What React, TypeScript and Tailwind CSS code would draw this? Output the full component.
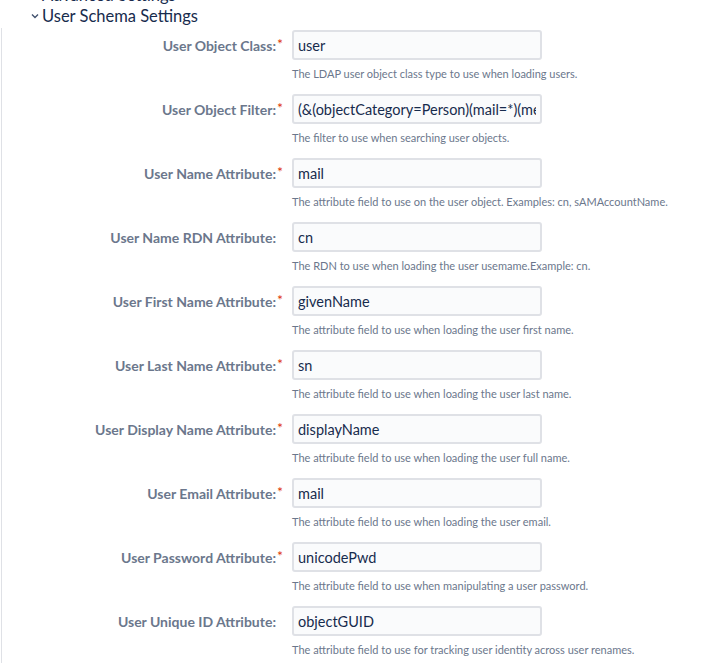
import React from "react";

type Field = {
  label: string;
  value: string;
  help: string;
  required?: boolean;
};

const fields: Field[] = [
  { label: "User Object Class:", value: "user", help: "The LDAP user object class type to use when loading users.", required: true },
  { label: "User Object Filter:", value: "(&(objectCategory=Person)(mail=*)(memberOf=*))", help: "The filter to use when searching user objects.", required: true },
  { label: "User Name Attribute:", value: "mail", help: "The attribute field to use on the user object. Examples: cn, sAMAccountName.", required: true },
  { label: "User Name RDN Attribute:", value: "cn", help: "The RDN to use when loading the user usemame.Example: cn." },
  { label: "User First Name Attribute:", value: "givenName", help: "The attribute field to use when loading the user first name.", required: true },
  { label: "User Last Name Attribute:", value: "sn", help: "The attribute field to use when loading the user last name.", required: true },
  { label: "User Display Name Attribute:", value: "displayName", help: "The attribute field to use when loading the user full name.", required: true },
  { label: "User Email Attribute:", value: "mail", help: "The attribute field to use when loading the user email.", required: true },
  { label: "User Password Attribute:", value: "unicodePwd", help: "The attribute field to use when manipulating a user password.", required: true },
  { label: "User Unique ID Attribute:", value: "objectGUID", help: "The attribute field to use for tracking user identity across user renames." },
];

function Chevron({ down }: { down?: boolean }) {
  return (
    <svg width="10" height="10" viewBox="0 0 10 10" className="shrink-0">
      {down ? (
        <path d="M2 3.5 L5 6.5 L8 3.5" fill="none" stroke="#42526e" strokeWidth="1.4" />
      ) : (
        <path d="M3.5 2 L6.5 5 L3.5 8" fill="none" stroke="#42526e" strokeWidth="1.4" />
      )}
    </svg>
  );
}

function Row({ field }: { field: Field }) {
  return (
    <div className="flex items-start h-16">
      <div className="w-[274px] shrink-0 flex justify-end h-[30px] items-center">
        <label className="relative text-[14px] font-bold text-[#6b778c]">
          {field.label}
          {field.required ? <span className="absolute -right-[7px] -top-[2px] text-[#de350b] font-normal">*</span> : null}
        </label>
      </div>
      <div className="ml-[16px] flex flex-col">
        <input
          readOnly
          defaultValue={field.value}
          className="w-[250px] h-[30px] rounded-[3px] border-2 border-[#dfe1e6] bg-[#fafbfc] px-[4px] text-[14.5px] text-[#172b4d] outline-none"
        />
        <p className="mt-[7px] text-[11px] leading-[14px] text-[#6b778c]">{field.help}</p>
      </div>
    </div>
  );
}

export default function App() {
  return (
    <main className="min-h-screen w-[721px] h-[663px] overflow-hidden bg-white font-['Lato',sans-serif]">
      <div className="-mt-[14px] pl-[30px]">
        <div className="flex items-center gap-[2px] h-[18px] text-[16.5px] text-[#172b4d]">
          <Chevron />
          <span>Advanced Settings</span>
        </div>
        <div className="flex items-center gap-[2px] h-6 text-[16.5px] text-[#172b4d]">
          <Chevron down />
          <span>User Schema Settings</span>
        </div>
      </div>
      <section className="ml-[1px] border-l border-[#dfe1e6] pt-[2px] min-h-[640px]">
        {fields.map((f) => (
          <Row key={f.label} field={f} />
        ))}
      </section>
    </main>
  );
}
